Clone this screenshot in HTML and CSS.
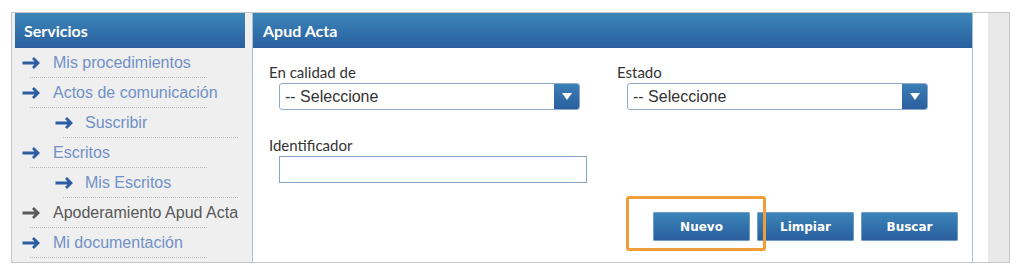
FILE: index.html
```html
<!DOCTYPE html>
<html lang="es">
<head>
<meta charset="utf-8">
<title>Apud Acta</title>
<link rel="stylesheet" href="styles.css">
</head>
<body>
<div class="frame">
  <aside class="sidebar">
    <div class="side-head">Servicios</div>
    <ul class="menu">
      <li class="item"><svg class="arrow" viewBox="0 0 18 12"><path d="M0.5 6H16M11 1l5 5-5 5"/></svg><span>Mis procedimientos</span></li>
      <li class="item"><svg class="arrow" viewBox="0 0 18 12"><path d="M0.5 6H16M11 1l5 5-5 5"/></svg><span>Actos de comunicación</span></li>
      <li class="item sub"><svg class="arrow" viewBox="0 0 18 12"><path d="M0.5 6H16M11 1l5 5-5 5"/></svg><span>Suscribir</span></li>
      <li class="item"><svg class="arrow" viewBox="0 0 18 12"><path d="M0.5 6H16M11 1l5 5-5 5"/></svg><span>Escritos</span></li>
      <li class="item sub"><svg class="arrow" viewBox="0 0 18 12"><path d="M0.5 6H16M11 1l5 5-5 5"/></svg><span>Mis Escritos</span></li>
      <li class="item active"><svg class="arrow" viewBox="0 0 18 12"><path d="M0.5 6H16M11 1l5 5-5 5"/></svg><span>Apoderamiento Apud Acta</span></li>
      <li class="item"><svg class="arrow" viewBox="0 0 18 12"><path d="M0.5 6H16M11 1l5 5-5 5"/></svg><span>Mi documentación</span></li>
    </ul>
  </aside>
  <main class="panel">
    <div class="panel-head">Apud Acta</div>
    <div class="panel-body">
      <div class="row">
        <div class="field">
          <label class="lbl">En calidad de</label>
          <div class="select"><span class="sel-text">-- Seleccione</span><span class="sel-btn"><svg viewBox="0 0 10 7"><path d="M0 0h10L5 7z"/></svg></span></div>
        </div>
        <div class="field">
          <label class="lbl">Estado</label>
          <div class="select"><span class="sel-text">-- Seleccione</span><span class="sel-btn"><svg viewBox="0 0 10 7"><path d="M0 0h10L5 7z"/></svg></span></div>
        </div>
      </div>
      <div class="field ident">
        <label class="lbl">Identificador</label>
        <div class="input"></div>
      </div>
      <div class="actions">
        <span class="btn-wrap"><button class="btn">Nuevo</button><span class="highlight"></span></span>
        <button class="btn">Limpiar</button>
        <button class="btn">Buscar</button>
      </div>
    </div>
  </main>
  <div class="gutter"></div>
  <div class="track"></div>
</div>
</body>
</html>
```

FILE: styles.css
```css
html, body {
  margin: 0;
  padding: 0;
  background: #ffffff;
}

.frame {
  margin: 12px 0 0 11px;
  width: 999px;
  height: 251px;
  box-sizing: border-box;
  border: 1px solid #c6c6c6;
  display: flex;
  overflow: hidden;
}

.sidebar {
  width: 240px;
  flex: none;
  background: #efefef;
  padding-left: 3px;
  box-sizing: border-box;
}

.side-head,
.panel-head {
  height: 35px;
  box-sizing: border-box;
  background: linear-gradient(#3b86b9, #2a5f9f);
  color: #ffffff;
  font-family: Lato, "Open Sans", sans-serif;
  font-weight: 700;
  font-size: 16px;
  line-height: 35px;
}

.side-head {
  width: 230px;
  padding-left: 9px;
}

.menu {
  list-style: none;
  margin: 0;
  padding: 0;
}

.item {
  height: 30px;
  display: flex;
  align-items: center;
  padding-left: 7px;
  gap: 13px;
  font-family: "Liberation Sans", Arial, sans-serif;
  font-size: 16px;
  color: #7191c7;
  background-image: repeating-linear-gradient(to right, #bdbdbd 0 1px, transparent 1px 2px);
  background-repeat: no-repeat;
  background-size: 177px 1px;
  background-position: 15px 29px;
}

.item span {
  margin-top: -1px;
}

.item.sub {
  padding-left: 40px;
  gap: 12px;
  background-size: 175px 1px;
  background-position: 48px 29px;
}

.item.active {
  color: #575757;
}

.arrow {
  width: 18px;
  height: 12px;
  flex: none;
  fill: none;
  stroke: #2b5da2;
  stroke-width: 2.8;
}

.item.active .arrow {
  stroke: #5a5a5a;
}

.panel {
  width: 721px;
  flex: none;
  box-sizing: border-box;
  border-left: 1px solid #a9c0d8;
  border-right: 1px solid #a9c0d8;
  background: #ffffff;
}

.panel-head {
  padding-left: 10px;
}

.panel-body {
  padding: 14px 14px 0 16px;
}

.row {
  display: grid;
  grid-template-columns: 348px 1fr;
}

.lbl {
  display: block;
  font-family: Lato, "Open Sans", sans-serif;
  font-size: 15px;
  line-height: 20px;
  color: #333333;
}

.select {
  margin: 1px 0 0 10px;
  width: 301px;
  height: 27px;
  box-sizing: border-box;
  border: 1px solid #8eaac8;
  border-radius: 3px;
  display: flex;
  align-items: center;
  justify-content: space-between;
  overflow: hidden;
}

.sel-text {
  padding-left: 5px;
  font-family: "Liberation Sans", Arial, sans-serif;
  font-size: 16px;
  color: #333333;
}

.sel-btn {
  width: 25px;
  height: 100%;
  background: linear-gradient(#3c7fb6, #2a5e9e);
  display: flex;
  align-items: center;
  justify-content: center;
}

.sel-btn svg {
  width: 10px;
  height: 7px;
  fill: #ffffff;
}

.ident {
  margin-top: 25px;
}

.input {
  margin: 1px 0 0 10px;
  width: 308px;
  height: 27px;
  box-sizing: border-box;
  border: 1px solid #86a6c6;
  background: #ffffff;
}

.actions {
  margin-top: 29px;
  display: flex;
  justify-content: flex-end;
  gap: 7px;
}

.btn-wrap {
  position: relative;
  display: flex;
}

.btn {
  width: 97px;
  height: 29px;
  box-sizing: border-box;
  border: 1px solid #6d9cc4;
  border-radius: 1px;
  background: linear-gradient(#3b84b8, #2a5f9e);
  color: #ffffff;
  font-family: "DejaVu Sans", Verdana, sans-serif;
  font-weight: 700;
  font-size: 12px;
  padding: 0;
  margin: 0;
}

.highlight {
  position: absolute;
  left: -27px;
  top: -16px;
  width: 140px;
  height: 55px;
  box-sizing: border-box;
  border: 3px solid #f19d3a;
  border-radius: 3px;
}

.gutter {
  width: 15px;
  flex: none;
  background: #ffffff;
}

.track {
  flex: 1;
  background: #e9e9e9;
}
```
